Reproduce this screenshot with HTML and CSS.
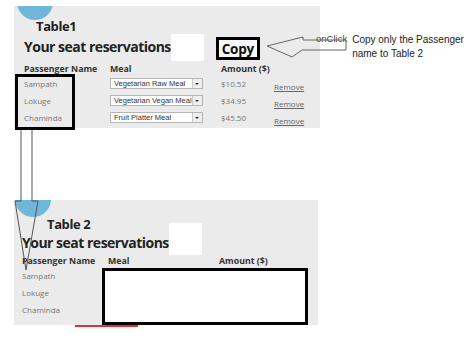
FILE: index.html
```html
<!DOCTYPE html>
<html lang="en">
<head>
  <meta charset="UTF-8">
  <title>Seat reservations - copy names</title>
  <link rel="stylesheet" href="styles.css">
</head>
<body>
  <div class="page">
    <!-- 上のテーブル（コピー元） -->
    <section class="panel panel-top">
      <span class="dot"></span>
      <div class="caption">Table1</div>
      <div class="title-row">
        <h2>Your seat reservations</h2>
        <span class="blank"></span>
        <button class="copy-btn">Copy</button>
      </div>
      <div class="grid">
        <div class="th">Passenger Name</div>
        <div class="th">Meal</div>
        <div class="th">Amount ($)</div>
        <div class="th"></div>

        <div class="name">Sampath</div>
        <div><span class="select">Vegetarian Raw Meal<i class="drop"></i></span></div>
        <div class="price">$10.52</div>
        <div><a class="remove">Remove</a></div>

        <div class="name">Lokuge</div>
        <div><span class="select">Vegetarian Vegan Meal<i class="drop"></i></span></div>
        <div class="price">$34.95</div>
        <div><a class="remove">Remove</a></div>

        <div class="name">Chaminda</div>
        <div><span class="select">Fruit Platter Meal<i class="drop"></i></span></div>
        <div class="price">$45.50</div>
        <div><a class="remove">Remove</a></div>
      </div>
      <div class="mark mark-names"></div>
    </section>

    <!-- 下のテーブル（コピー先） -->
    <section class="panel panel-bottom">
      <span class="dot"></span>
      <div class="caption">Table 2</div>
      <div class="title-row">
        <h2>Your seat reservations</h2>
        <span class="blank"></span>
      </div>
      <div class="grid">
        <div class="th">Passenger Name</div>
        <div class="th">Meal</div>
        <div class="th">Amount ($)</div>
        <div class="th"></div>

        <div class="name">Sampath</div>
        <div></div><div></div><div></div>
        <div class="name">Lokuge</div>
        <div></div><div></div><div></div>
        <div class="name">Chaminda</div>
        <div></div><div></div><div></div>
      </div>
      <div class="mark mark-empty"></div>
      <div class="red-line"></div>
    </section>

    <!-- 注釈 -->
    <div class="note">
      <span class="onclick">onClick</span>
      <p>Copy only the Passenger<br>name to Table 2</p>
    </div>

    <svg class="arrows" width="474" height="351" viewBox="0 0 474 351">
      <!-- 左向き矢印 -->
      <polygon points="267,46 303,37 303,40 346,40 346,50 302,50 292,57" fill="none" stroke="#666" stroke-width="1"/>
      <!-- 下向き矢印 -->
      <polyline points="21,130 21,201 15,201 26,270 38,201 32,201 32,130" fill="none" stroke="#555" stroke-width="1"/>
    </svg>
  </div>
</body>
</html>
```

FILE: styles.css
```css
body {
  margin: 0;
  font-family: "Open Sans", "Noto Sans", sans-serif;
  color: #222;
  background: #fff;
}
.page {
  position: relative;
  width: 474px;
  height: 351px;
  padding-top: 6px;
  box-sizing: border-box;
}
/* テーブルの背景パネル */
.panel {
  position: relative;
  margin-left: 14px;
  width: 306px;
  background: #ebebeb;
  padding-left: 10px;
  box-sizing: border-box;
}
.panel-top {
  height: 122px;
  padding-top: 13px;
}
.panel-bottom {
  margin-top: 72px;
  width: 304px;
  height: 125px;
  padding-left: 8px;
  padding-top: 18px;
}
.dot {
  position: absolute;
  left: 3px;
  top: -22px;
  width: 36px;
  height: 36px;
  border-radius: 50%;
  background: #6fb6d8;
  clip-path: inset(22px 0 0 0);
}
.panel-bottom .dot {
  left: 1px;
  top: -19px;
  clip-path: inset(19px 0 0 0);
}
.caption {
  margin-left: 12px;
  font-size: 13px;
  font-weight: 700;
  line-height: 15px;
  letter-spacing: -0.4px;
}
.panel-bottom .caption {
  margin-left: 25px;
  line-height: 13px;
}
.title-row {
  display: flex;
  align-items: flex-start;
  height: 29px;
}
h2 {
  margin: 3px 0 0;
  font-size: 14px;
  font-weight: 700;
  line-height: 19px;
  letter-spacing: -0.5px;
}
.blank {
  width: 33px;
  height: 27px;
  margin-left: 0;
  background: #fff;
}
.panel-bottom .title-row {
  height: 24px;
}
.panel-bottom h2 {
  margin-top: 4px;
  line-height: 15px;
}
.panel-bottom .blank {
  height: 32px;
  margin-top: -8px;
}
.copy-btn {
  margin: 3px 0 0 12px;
  width: 44px;
  height: 23px;
  padding: 0;
  border: 3px solid #000;
  background: #f7f7f7;
  font: 700 13.5px/16px "Open Sans", sans-serif;
  letter-spacing: -0.2px;
  color: #111;
}
/* 行と列 */
.grid {
  display: grid;
  grid-template-columns: 86px 111px 53px 40px;
  grid-template-rows: 12px repeat(3, 17px);
  align-items: center;
}
.th {
  font-size: 8.8px;
  font-weight: 700;
  color: #333;
  line-height: 12px;
}
.name,
.price {
  font-size: 8px;
  color: #777;
}
.select {
  position: relative;
  display: block;
  width: 93px;
  height: 11px;
  border: 1px solid #b5b5b5;
  background: #fff;
  box-sizing: border-box;
  font: 7.5px/9px "Liberation Sans", Arial, sans-serif;
  color: #333;
  padding-left: 3px;
  white-space: nowrap;
  overflow: hidden;
}
.drop {
  position: absolute;
  right: 0;
  top: 0;
  width: 9px;
  height: 9px;
  border-left: 1px solid #c9c9c9;
  background: #eee;
}
.drop::after {
  content: "";
  position: absolute;
  left: 2px;
  top: 4px;
  border-left: 2px solid transparent;
  border-right: 2px solid transparent;
  border-top: 2px solid #333;
}
.remove {
  font-size: 8px;
  color: #666;
  text-decoration: underline;
}
/* 注釈（黒枠・赤線） */
.mark {
  position: absolute;
  border: 3px solid #000;
  box-sizing: border-box;
}
.mark-names {
  left: 1px;
  top: 68px;
  width: 60px;
  height: 56px;
}
.mark-empty {
  left: 88px;
  top: 68px;
  width: 206px;
  height: 57px;
  background: #fff;
}
.red-line {
  position: absolute;
  left: 61px;
  top: 125px;
  width: 63px;
  height: 2px;
  background: #e03030;
}
.note {
  position: absolute;
  left: 316px;
  top: 33px;
  display: flex;
  font-family: "Liberation Sans", Arial, sans-serif;
  color: #333;
}
.onclick {
  font-size: 9.5px;
  line-height: 12px;
  color: #444;
}
.note p {
  margin: 0 0 0 5px;
  font-size: 10px;
  line-height: 14px;
  color: #222;
}
.arrows {
  position: absolute;
  left: 0;
  top: 0;
  pointer-events: none;
}
```
